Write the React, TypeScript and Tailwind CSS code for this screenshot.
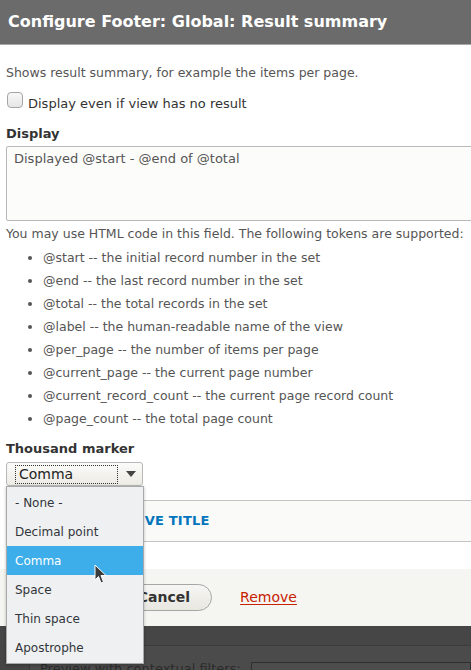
import { useState } from 'react';

const tokens = [
  '@start -- the initial record number in the set',
  '@end -- the last record number in the set',
  '@total -- the total records in the set',
  '@label -- the human-readable name of the view',
  '@per_page -- the number of items per page',
  '@current_page -- the current page number',
  '@current_record_count -- the current page record count',
  '@page_count -- the total page count',
];

const options = ['- None -', 'Decimal point', 'Comma', 'Space', 'Thin space', 'Apostrophe'];

function Cursor() {
  return (
    <svg width="14" height="22" viewBox="0 0 14 22" className="absolute left-[94px] top-[564px]">
      <path d="M1 1 L1 16 L4.5 12.5 L7 19 L9.5 18 L7 11.5 L12 11.5 Z" fill="#3b3b3b" stroke="#ffffff" strokeWidth="1" strokeLinejoin="round" />
    </svg>
  );
}

export default function App() {
  const [selected, setSelected] = useState('Comma');
  const [noResult, setNoResult] = useState(false);

  return (
    <div className="relative w-[471px] h-[670px] overflow-hidden bg-white font-['DejaVu_Sans',sans-serif]">
      <div className="h-[45px] bg-[#6b6b6b] border-b border-[#a8a8a8] px-2 flex items-center">
        <h1 className="text-[16px] font-bold text-white leading-none pb-[1px]">Configure Footer: Global: Result summary</h1>
      </div>

      <div className="pl-[6px]">
        <p className="mt-[19px] text-[12.5px] leading-[18px] text-[#555]">Shows result summary, for example the items per page.</p>

        <label className="mt-[10px] flex items-start gap-[5px]">
          <input
            type="checkbox"
            checked={noResult}
            onChange={(e) => setNoResult(e.target.checked)}
            className="appearance-none w-[16px] h-[16px] ml-[1px] rounded-[4px] border border-[#a5a5a5] bg-gradient-to-b from-[#f8f8f8] to-[#e6e6e6]"
          />
          <span className="mt-[3px] text-[13px] leading-[18px] text-[#333]">Display even if view has no result</span>
        </label>

        <div className="mt-[12px] text-[13px] font-bold leading-[18px] text-[#333]">Display</div>
        <div className="mt-[3px] w-[480px] h-[75px] border border-[#b8b8b8] rounded-[2px] bg-[#fcfcfa] px-[7px] pt-[3px] text-[13px] leading-[18px] text-[#555]">
          Displayed @start - @end of @total
        </div>

        <p className="mt-[4px] text-[12.5px] leading-[18px] text-[#555]">You may use HTML code in this field. The following tokens are supported:</p>
        <ul className="mt-[3px] pl-[37px] list-disc text-[12.5px] leading-[23px] text-[#555] marker:text-[#555]">
          {tokens.map((t) => (
            <li key={t}>{t}</li>
          ))}
        </ul>

        <div className="mt-[10px] text-[13px] font-bold leading-[18px] text-[#333]">Thousand marker</div>
        <div className="mt-[4px] w-[137px] h-[24px] rounded-[3px] border border-[#b8b8b8] bg-gradient-to-b from-[#fbfbf9] to-[#ecebe4] flex items-center pl-[8px] pr-[6px]">
          <span className="flex-1 h-[19px] border border-dotted border-[#333] pl-[3px] text-[14px] leading-[17px] text-[#222]">{selected}</span>
          <svg width="10" height="6" viewBox="0 0 10 6" className="ml-[8px]">
            <path d="M0 0 H10 L5 6 Z" fill="#444" />
          </svg>
        </div>

        <div className="mt-[14px] h-[42px] border-y border-[#c3c3c3] bg-[#fafaf8] flex items-center pl-[31px]">
          <span className="text-[13px] font-bold text-[#0074bd] tracking-[0.2px]">ADMINISTRATIVE TITLE</span>
        </div>
      </div>

      <div className="mt-[27px] h-[57px] bg-[#f5f5f2] flex items-center pl-[17px]">
        <button className="h-[27px] px-[21px] rounded-full border border-[#a6a6a6] bg-gradient-to-b from-[#f6f6f3] to-[#e8e7e0] text-[14px] font-bold text-[#333]">Apply</button>
        <button className="ml-[10px] h-[27px] px-[21px] rounded-full border border-[#a6a6a6] bg-gradient-to-b from-[#f6f6f3] to-[#e8e7e0] text-[14px] font-bold text-[#333]">Cancel</button>
        <a href="#" className="ml-[28px] text-[14px] text-[#c72100] underline underline-offset-2">Remove</a>
      </div>

      <div className="h-[19px] bg-[#464646]" />
      <div className="h-[30px] bg-[#454545] flex">
        <div className="w-[29px]" />
        <div className="flex-1 border-l border-t border-[#3c3c3c] bg-[#4b4b4b] flex items-start pt-[15px] pl-[10px]">
          <span className="text-[13px] leading-[16px] text-[#2a2a2a]">Preview with contextual filters:</span>
          <div className="ml-[10px] mt-[1px] flex-1 h-[20px] border border-[#2f2f2f] bg-[#4d4d4d]" />
        </div>
      </div>

      <ul className="absolute left-[6px] top-[486px] w-[138px] border border-[#a9a9a9] bg-[#eff0f1] shadow-[0_1px_3px_rgba(0,0,0,0.25)] py-[1px]">
        {options.map((o) => (
          <li
            key={o}
            onClick={() => setSelected(o)}
            className={`h-[29px] flex items-center pl-[8px] text-[12px] ${o === 'Comma' ? 'bg-[#3daee9] text-white' : 'text-[#31363b]'}`}
          >
            {o}
          </li>
        ))}
      </ul>

      <Cursor />
    </div>
  );
}
